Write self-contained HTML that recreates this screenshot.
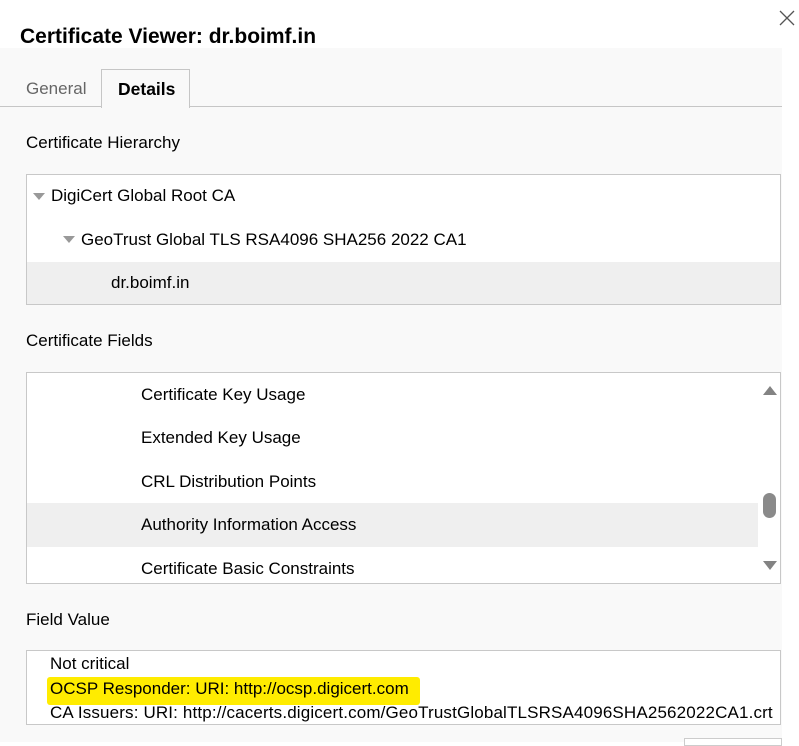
<!DOCTYPE html>
<html><head><meta charset="utf-8"><style>
body{margin:0;width:799px;height:742px;overflow:hidden;background:#fff;font-family:"Segoe UI","Liberation Sans",sans-serif;font-size:17px;color:#000;position:relative}
.a{position:absolute;white-space:nowrap}
.panel{position:absolute;left:0;top:48px;width:782px;height:694px;background:#f9f9f9}
.box{position:absolute;left:26px;width:755px;background:#fff;border:1px solid #c8c8c8;box-sizing:border-box}
.tri{position:absolute;width:0;height:0;border-left:6px solid transparent;border-right:6px solid transparent;border-top:7px solid #999}
</style></head><body>
<div class="a" style="left:20px;top:25px;font-size:21px;font-weight:bold">Certificate Viewer: dr.boimf.in</div>
<svg class="a" style="left:778px;top:9px" width="18" height="18"><path d="M2 2L16 16M16 2L2 16" stroke="#555" stroke-width="1.3"/></svg>
<div class="panel"></div>
<div class="a" style="left:0;top:106px;width:782px;height:1px;background:#c6c6c6"></div>
<div class="a" style="left:101px;top:69px;width:87px;height:38px;border:1px solid #c6c6c6;border-bottom:none;background:#f9f9f9"></div>
<div class="a" style="left:26px;top:79px;color:#666">General</div>
<div class="a" style="left:118px;top:79px;font-weight:bold;font-size:17.5px">Details</div>
<div class="a" style="left:26px;top:133px">Certificate Hierarchy</div>
<div class="box" style="top:174px;height:131px">
 <div class="tri" style="left:6px;top:18px"></div>
 <div class="a" style="left:24px;top:11px">DigiCert Global Root CA</div>
 <div class="tri" style="left:36px;top:61px"></div>
 <div class="a" style="left:54px;top:55px">GeoTrust Global TLS RSA4096 SHA256 2022 CA1</div>
 <div class="a" style="left:0;top:87px;width:753px;height:42px;background:#efefef"></div>
 <div class="a" style="left:84px;top:98px">dr.boimf.in</div>
</div>
<div class="a" style="left:26px;top:331px">Certificate Fields</div>
<div class="box" style="top:372px;height:212px">
 <div class="a" style="left:114px;top:12px">Certificate Key Usage</div>
 <div class="a" style="left:114px;top:55px">Extended Key Usage</div>
 <div class="a" style="left:114px;top:99px">CRL Distribution Points</div>
 <div class="a" style="left:0;top:130px;width:731px;height:44px;background:#efefef"></div>
 <div class="a" style="left:114px;top:142px">Authority Information Access</div>
 <div class="a" style="left:114px;top:186px">Certificate Basic Constraints</div>
 <div class="a" style="left:736px;top:13px;width:0;height:0;border-left:7px solid transparent;border-right:7px solid transparent;border-bottom:9px solid #838383"></div>
 <div class="a" style="left:736px;top:188px;width:0;height:0;border-left:7px solid transparent;border-right:7px solid transparent;border-top:9px solid #838383"></div>
 <div class="a" style="left:736px;top:120px;width:13px;height:25px;border-radius:7px;background:#8a8a8a"></div>
</div>
<div class="a" style="left:26px;top:610px">Field Value</div>
<div class="box" style="top:650px;height:75px;overflow:hidden">
 <div class="a" style="left:20px;top:26px;width:373px;height:28px;background:#ffec00;border-radius:3px"></div>
 <div class="a" style="left:23px;top:3px">Not critical</div>
 <div class="a" style="left:23px;top:28px">OCSP Responder: URI: http://ocsp.digicert.com</div>
 <div class="a" style="left:23px;top:52px;letter-spacing:0.15px">CA Issuers: URI: http://cacerts.digicert.com/GeoTrustGlobalTLSRSA4096SHA2562022CA1.crt</div>
</div>
<div class="a" style="left:684px;top:738px;width:96px;height:6px;border:1px solid #ccc;background:#fff"></div>
</body></html>
